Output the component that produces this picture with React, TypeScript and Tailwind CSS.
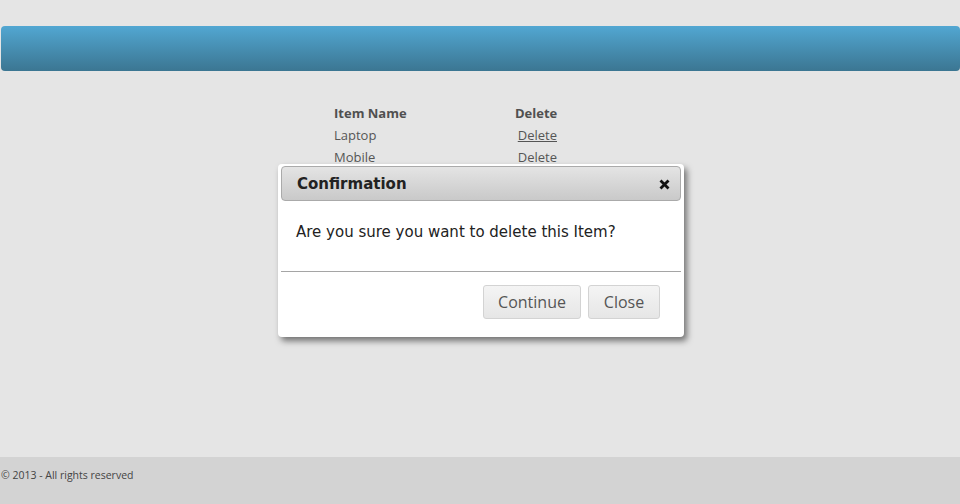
import React from "react";

export default function App() {
  return (
    <div className="relative min-h-[504px] flex flex-col bg-[#e5e5e5] font-['Open_Sans',sans-serif]">
      <div className="pt-[26px] pl-[1px]">
        <div className="h-[45px] rounded-[4px] bg-gradient-to-b from-[#52a7d2] to-[#3b7692]" />
      </div>
      <main className="flex-1 pt-[31px] pl-[334px]">
        <div className="grid grid-cols-[181px_42px] text-[13px] leading-[22px] text-[#555]">
          <div className="font-bold text-[#505050]">Item Name</div>
          <div className="font-bold text-[#505050] text-right">Delete</div>
          <div>Laptop</div>
          <div className="text-right underline">Delete</div>
          <div>Mobile</div>
          <div className="text-right">Delete</div>
        </div>
      </main>
      <footer className="h-[47px] bg-[#d3d3d3] pt-[11px] pl-[1px] text-[10.5px] text-[#444]">
        © 2013 - All rights reserved
      </footer>

      <div className="absolute left-[278px] top-[164px] w-[406px] h-[173px] bg-white rounded-[4px] shadow-[3px_4px_6px_rgba(0,0,0,0.5)] p-[3px] pt-[2px] font-['DejaVu_Sans',Verdana,sans-serif]">
        <div className="flex items-center justify-between h-[35px] rounded-[4px] border border-[#aaa] bg-gradient-to-b from-[#e4e4e4] to-[#c9c9c9] pl-[15px] pr-[10px]">
          <span className="text-[15px] font-bold text-[#222] mt-[1px]">Confirmation</span>
          <svg width="11" height="11" viewBox="0 0 11 11" className="mt-[1px]">
            <path d="M1.5 1.5 L9.5 9.5 M9.5 1.5 L1.5 9.5" stroke="#111" strokeWidth="2.8" strokeLinecap="butt" />
          </svg>
        </div>
        <div className="h-[70px] pl-[15px] pt-[20px] text-[15px] text-[#222]">
          Are you sure you want to delete this Item?
        </div>
        <div className="border-t border-[#a5a5a5] flex justify-end gap-[7px] pt-[13px] pr-[21px]">
          <button className="h-[34px] w-[98px] rounded-[3px] border border-[#d3d3d3] bg-gradient-to-b from-[#f4f4f4] to-[#e6e6e6] text-[16px] text-[#555] font-['Open_Sans',sans-serif]">
            Continue
          </button>
          <button className="h-[34px] w-[72px] rounded-[3px] border border-[#d3d3d3] bg-gradient-to-b from-[#f4f4f4] to-[#e6e6e6] text-[16px] text-[#555] font-['Open_Sans',sans-serif]">
            Close
          </button>
        </div>
      </div>
    </div>
  );
}
